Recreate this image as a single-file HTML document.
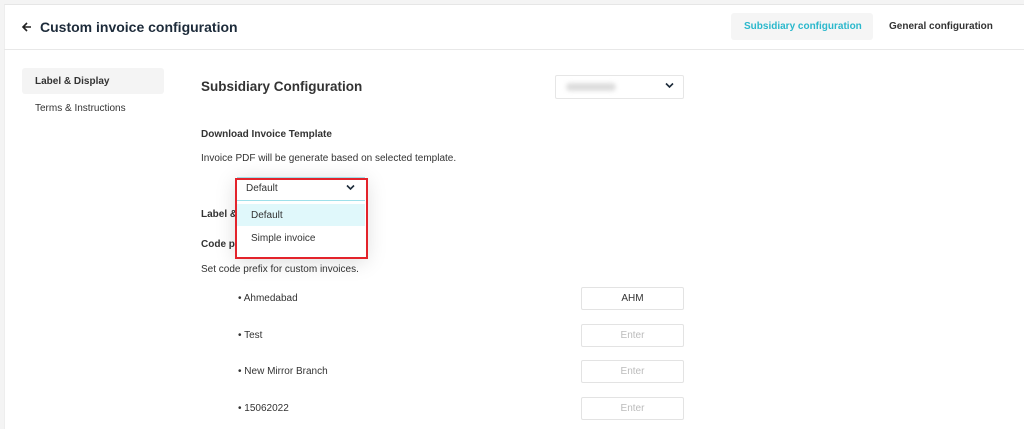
<!DOCTYPE html><html><head><style>
body{margin:0;width:1024px;height:429px;background:#f4f4f4;font-family:"Liberation Sans",sans-serif;overflow:hidden;position:relative}
.a{position:absolute;white-space:nowrap}
.card{position:absolute;left:4px;top:4px;right:0;bottom:0;background:#fff;border-top:1px solid #e6e6e6;border-left:1px solid #eee}
.t{font-size:10px;color:#333}
.inp{position:absolute;left:581px;width:101px;height:21px;border:1px solid #e3e3e3;border-radius:2px;font-size:10px;text-align:center;line-height:21px;color:#bbb}
</style></head><body>
<div class="card"></div>
<div class="a" style="left:4px;right:0;top:49px;border-top:1px solid #e8e8e8"></div>
<svg class="a" style="left:21px;top:21px" width="12" height="12" viewBox="0 0 12 12"><path d="M10 6H2M6 2L2 6l4 4" stroke="#222" stroke-width="1.6" fill="none"/></svg>
<div class="a" style="left:40px;top:19px;font-size:14px;font-weight:bold;color:#1d2b3a">Custom invoice configuration</div>
<div class="a" style="left:731px;top:13px;width:142px;height:27px;background:#f5f5f5;border-radius:3px"></div>
<div class="a" style="left:744px;top:21px;font-size:10px;font-weight:bold;color:#2bb8cc">Subsidiary configuration</div>
<div class="a" style="left:889px;top:21px;font-size:10px;font-weight:bold;color:#333">General configuration</div>
<div class="a" style="left:22px;top:68px;width:142px;height:26px;background:#f4f4f4;border-radius:3px"></div>
<div class="a t" style="left:35px;top:76px;font-weight:bold">Label &amp; Display</div>
<div class="a t" style="left:35px;top:103px">Terms &amp; Instructions</div>
<div class="a" style="left:201px;top:79px;font-size:13.5px;font-weight:bold;color:#333">Subsidiary Configuration</div>
<div class="a" style="left:555px;top:75px;width:127px;height:22px;border:1px solid #e6e6e6;border-radius:2px"></div>
<div class="a" style="left:566px;top:83px;width:50px;height:8px;background:#ddd;border-radius:4px;filter:blur(2px)"></div>
<svg class="a" style="left:665px;top:82px" width="9" height="7"><path d="M1 1.5l3.5 3.5L8 1.5" stroke="#1d2b3a" stroke-width="1.6" fill="none"/></svg>
<div class="a t" style="left:201px;top:129px;font-weight:bold">Download Invoice Template</div>
<div class="a t" style="left:201px;top:153px">Invoice PDF will be generate based on selected template.</div>
<div class="a t" style="left:201px;top:209px;font-weight:bold">Label &amp;</div>
<div class="a t" style="left:201px;top:239px;font-weight:bold">Code p</div>
<div class="a t" style="left:201px;top:264px">Set code prefix for custom invoices.</div>
<div class="a" style="left:236px;top:177px;width:130px;height:80px;background:#fff;box-shadow:0 4px 20px rgba(0,0,0,.15)"></div>
<div class="a" style="left:237px;top:177px;width:128px;height:22px;border-top:1px solid #9ee0ea;border-bottom:1px solid #9ee0ea"></div>
<div class="a t" style="left:246px;top:183px">Default</div>
<svg class="a" style="left:346px;top:184px" width="9" height="7"><path d="M1 1.5l3.5 3.5L8 1.5" stroke="#1d2b3a" stroke-width="1.6" fill="none"/></svg>
<div class="a" style="left:237px;top:204px;width:128px;height:22px;background:#e0f8fb"></div>
<div class="a t" style="left:251px;top:210px">Default</div>
<div class="a t" style="left:251px;top:233px">Simple invoice</div>
<div class="a" style="left:235px;top:178px;width:129px;height:77px;border:2px solid #e3232b"></div>
<div class="a t" style="left:238px;top:293px">• Ahmedabad</div>
<div class="a t" style="left:238px;top:330px">• Test</div>
<div class="a t" style="left:238px;top:366px">• New Mirror Branch</div>
<div class="a t" style="left:238px;top:403px">• 15062022</div>
<div class="inp" style="top:287px;color:#333">AHM</div>
<div class="inp" style="top:324px">Enter</div>
<div class="inp" style="top:360px">Enter</div>
<div class="inp" style="top:397px">Enter</div>
</body></html>
